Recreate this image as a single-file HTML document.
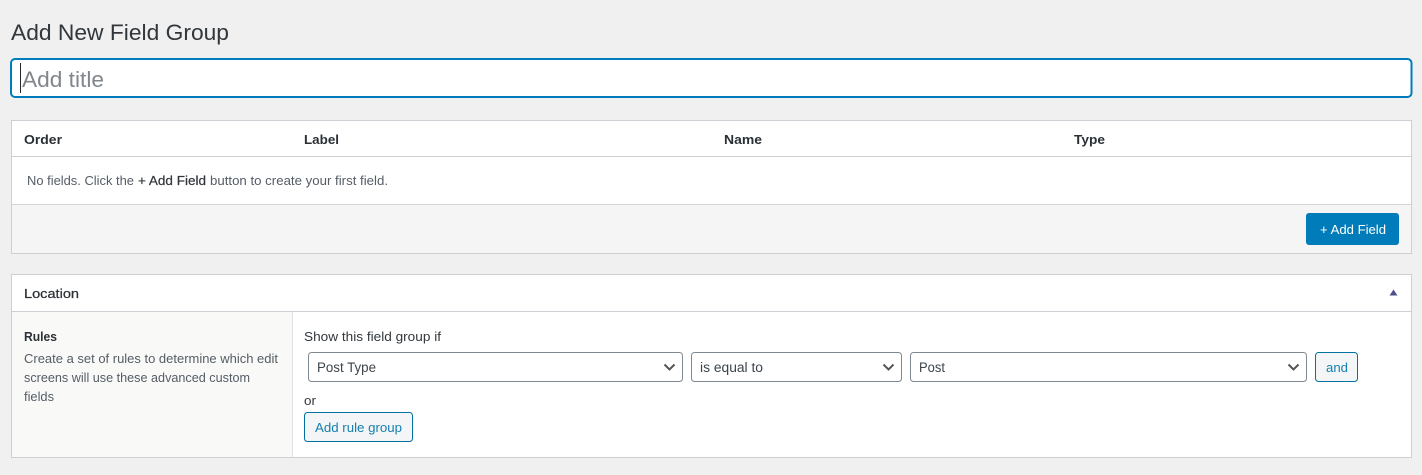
<!DOCTYPE html>
<html lang="en">
<head>
<meta charset="utf-8">
<title>Add New Field Group</title>
<style>
html,body{margin:0;padding:0;width:1422px;height:475px;overflow:hidden;background:#f0f0f0;}
svg{display:block;position:absolute;left:0;top:0;}
text{font-family:"Liberation Sans",Arial,sans-serif;font-size:13px;fill:#32373c;}
.b{font-weight:700;fill:#2b3035;}
.d{fill:#555d66;}
.s{fill:#3c434a;font-size:13.5px;}
.l{fill:#1580ae;font-size:13px;}
</style>
</head>
<body>
<svg width="1422" height="475" viewBox="0 0 1422 475" xmlns="http://www.w3.org/2000/svg">
  <rect width="1422" height="475" fill="#f0f0f0"/>

  <text x="11" y="40" style="font-size:22.5px;fill:#32373c" textLength="218" lengthAdjust="spacingAndGlyphs">Add New Field Group</text>

  <rect x="11" y="59" width="1400.5" height="38" rx="4" fill="#fff" stroke="#007cba" stroke-width="2"/>
  <rect x="20" y="63" width="1" height="30" fill="#23282d"/>
  <text x="22" y="87" style="font-size:22.5px;fill:#80868b" textLength="82" lengthAdjust="spacingAndGlyphs">Add title</text>

  <rect x="11.5" y="120.5" width="1400" height="133" fill="#fff" stroke="#ccd0d4"/>
  <rect x="12" y="205" width="1399" height="48" fill="#f5f5f5"/>
  <line x1="12" x2="1411" y1="156.5" y2="156.5" stroke="#ccd0d4"/>
  <line x1="12" x2="1411" y1="204.5" y2="204.5" stroke="#d2d4d7"/>
  <text class="b" x="24" y="144" textLength="38" lengthAdjust="spacingAndGlyphs">Order</text>
  <text class="b" x="304" y="144" textLength="35" lengthAdjust="spacingAndGlyphs">Label</text>
  <text class="b" x="724" y="144" textLength="38" lengthAdjust="spacingAndGlyphs">Name</text>
  <text class="b" x="1074" y="144" textLength="31" lengthAdjust="spacingAndGlyphs">Type</text>
  <text class="d" x="27" y="185" style="font-size:12.5px" textLength="107" lengthAdjust="spacingAndGlyphs">No fields. Click the</text>
  <text x="138" y="185" style="font-size:12.5px;fill:#32373c;stroke:#32373c;stroke-width:.2" textLength="68" lengthAdjust="spacingAndGlyphs">+ Add Field</text>
  <text class="d" x="210" y="185" style="font-size:12.5px" textLength="178" lengthAdjust="spacingAndGlyphs">button to create your first field.</text>

  <rect x="1306" y="213" width="93" height="32" rx="3" fill="#007cba"/>
  <text x="1320" y="234" style="fill:#fff;font-size:13px" textLength="66" lengthAdjust="spacingAndGlyphs">+ Add Field</text>

  <rect x="11.5" y="274.5" width="1400" height="183" fill="#fff" stroke="#ccd0d4"/>
  <line x1="12" x2="1411" y1="311.5" y2="311.5" stroke="#ccd0d4"/>
  <rect x="12" y="312" width="280" height="145" fill="#f9f9f8"/>
  <line x1="292.5" x2="292.5" y1="312" y2="457" stroke="#e1e1e1"/>
  <text x="24" y="298" style="fill:#2b3035;stroke:#2b3035;stroke-width:.25" textLength="55" lengthAdjust="spacingAndGlyphs">Location</text>
  <path d="M1389.5 295.5 L1393.5 289.5 L1397.5 295.5 Z" fill="#50508c"/>

  <text class="b" x="24" y="341" style="font-size:12.5px" textLength="33" lengthAdjust="spacingAndGlyphs">Rules</text>
  <text class="d" x="24" y="363" style="font-size:12.5px" textLength="254" lengthAdjust="spacingAndGlyphs">Create a set of rules to determine which edit</text>
  <text class="d" x="24" y="382" style="font-size:12.5px" textLength="226" lengthAdjust="spacingAndGlyphs">screens will use these advanced custom</text>
  <text class="d" x="24" y="401" style="font-size:12.5px" textLength="30" lengthAdjust="spacingAndGlyphs">fields</text>

  <text x="304" y="341" style="font-size:12.5px;fill:#32373c" textLength="137" lengthAdjust="spacingAndGlyphs">Show this field group if</text>

  <rect x="308.5" y="352.5" width="374" height="29" rx="3" fill="#fff" stroke="#7e8993"/>
  <text class="s" x="317" y="372" textLength="59" lengthAdjust="spacingAndGlyphs">Post Type</text>
  <path d="M664.5 364.5 L669.5 369.5 L674.5 364.5" fill="none" stroke="#555" stroke-width="2"/>

  <rect x="691.5" y="352.5" width="210" height="29" rx="3" fill="#fff" stroke="#7e8993"/>
  <text class="s" x="700" y="372" textLength="63" lengthAdjust="spacingAndGlyphs">is equal to</text>
  <path d="M883.5 364.5 L888.5 369.5 L893.5 364.5" fill="none" stroke="#555" stroke-width="2"/>

  <rect x="910.5" y="352.5" width="396" height="29" rx="3" fill="#fff" stroke="#7e8993"/>
  <text class="s" x="919" y="372" textLength="26" lengthAdjust="spacingAndGlyphs">Post</text>
  <path d="M1288.5 364.5 L1293.5 369.5 L1298.5 364.5" fill="none" stroke="#555" stroke-width="2"/>

  <rect x="1315.5" y="352.5" width="42" height="29" rx="3" fill="#f3f5f6" stroke="#0071a1"/>
  <text class="l" x="1326" y="372" textLength="22" lengthAdjust="spacingAndGlyphs">and</text>

  <text x="304" y="405" style="font-size:13px;fill:#32373c" textLength="12" lengthAdjust="spacingAndGlyphs">or</text>

  <rect x="304.5" y="412.5" width="108" height="29" rx="3" fill="#f3f5f6" stroke="#0071a1"/>
  <text class="l" x="315" y="432" textLength="87" lengthAdjust="spacingAndGlyphs">Add rule group</text>
</svg>
</body>
</html>
